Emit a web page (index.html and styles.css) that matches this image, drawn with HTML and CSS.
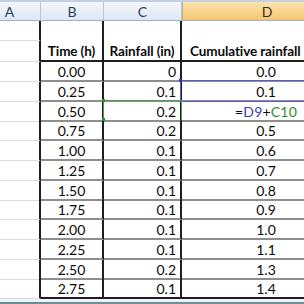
FILE: index.html
```html
<!DOCTYPE html>
<html lang="en">
<head>
  <meta charset="UTF-8">
  <title>Rainfall sheet</title>
  <link rel="stylesheet" href="styles.css">
</head>
<body>
  <div class="sheet">
    <div class="row colhead">
      <div class="cell first">A</div>
      <div class="cell">B</div>
      <div class="cell">C</div>
      <div class="cell active">D</div>
    </div>
    <div class="row blank">
      <div class="cell a"></div>
      <div class="cell t"></div>
      <div class="cell t"></div>
      <div class="cell t"></div>
    </div>
    <div class="row titles">
      <div class="cell a"></div>
      <div class="cell t">Time (h)</div>
      <div class="cell t">Rainfall (in)</div>
      <div class="cell t wide">Cumulative rainfall (in)</div>
    </div>
    <div class="row data"><div class="cell a"></div><div class="cell t">0.00</div><div class="cell t num">0</div><div class="cell t">0.0</div></div>
    <div class="row data"><div class="cell a"></div><div class="cell t">0.25</div><div class="cell t num">0.1</div><div class="cell t ref-blue">0.1</div></div>
    <div class="row data"><div class="cell a"></div><div class="cell t">0.50</div><div class="cell t num ref-green">0.2</div><div class="cell t edit">=<span class="blue">D9</span>+<span class="green">C10</span></div></div>
    <div class="row data"><div class="cell a"></div><div class="cell t">0.75</div><div class="cell t num">0.2</div><div class="cell t">0.5</div></div>
    <div class="row data"><div class="cell a"></div><div class="cell t">1.00</div><div class="cell t num">0.1</div><div class="cell t">0.6</div></div>
    <div class="row data"><div class="cell a"></div><div class="cell t">1.25</div><div class="cell t num">0.1</div><div class="cell t">0.7</div></div>
    <div class="row data"><div class="cell a"></div><div class="cell t">1.50</div><div class="cell t num">0.1</div><div class="cell t">0.8</div></div>
    <div class="row data"><div class="cell a"></div><div class="cell t">1.75</div><div class="cell t num">0.1</div><div class="cell t">0.9</div></div>
    <div class="row data"><div class="cell a"></div><div class="cell t">2.00</div><div class="cell t num">0.1</div><div class="cell t">1.0</div></div>
    <div class="row data"><div class="cell a"></div><div class="cell t">2.25</div><div class="cell t num">0.1</div><div class="cell t">1.1</div></div>
    <div class="row data"><div class="cell a"></div><div class="cell t">2.50</div><div class="cell t num">0.2</div><div class="cell t">1.3</div></div>
    <div class="row data last"><div class="cell a"></div><div class="cell t">2.75</div><div class="cell t num">0.1</div><div class="cell t">1.4</div></div>
    <div class="bottom-bar"></div>
  </div>
</body>
</html>
```

FILE: styles.css
```css
body {
  margin: 0;
  background-color: #ffffff;
  font-family: Lato, "Liberation Sans", sans-serif;
  color: #0a0a0a;
}

.sheet {
  width: 304px;
  height: 304px;
  overflow: hidden;
  position: relative;
}

.row {
  display: grid;
  grid-template-columns: 41px 63px 78px 170px;
  box-sizing: border-box;
}

.cell {
  display: flex;
  align-items: center;
  justify-content: center;
  box-sizing: border-box;
  font-size: 14px;
  white-space: nowrap;
  position: relative;
}

/* column letters */
.colhead {
  height: 21px;
  border-top: 2px solid #c3d1e3;
  border-bottom: 1px solid #9db3cc;
}

.colhead .cell {
  background: linear-gradient(#f4f7fc, #dde7f3);
  border-right: 1px solid #b7c7db;
  color: #2b3f5a;
  font-size: 14px;
  padding-top: 1px;
}

/* column A is partly scrolled off the left edge */
.colhead .cell.first {
  padding-right: 21px;
}

.colhead .cell.active {
  background: linear-gradient(#fbe3ae, #f6c673);
  border-left: 1px solid #c9a86a;
  color: #3a3020;
}

/* column A keeps the light gridlines */
.cell.a {
  border-bottom: 1px solid #d6dde8;
  border-right: 2px solid #1e1e1e;
}

.cell.t {
  border-right: 2px solid #1e1e1e;
}

.blank {
  height: 20px;
}

.titles {
  height: 21px;
}

.titles .cell.t {
  font-weight: bold;
  font-size: 13.5px;
  letter-spacing: -0.1px;
  border-bottom: 2px solid #1e1e1e;
  align-items: flex-end;
  padding-bottom: 1px;
}

.titles .cell.wide {
  justify-content: flex-start;
  padding-left: 8px;
  overflow: hidden;
}

.data {
  height: 19.75px;
}

.data .cell.t {
  border-bottom: 2px solid #8e8e8e;
  padding-top: 1px;
}

.data.last .cell.t {
  border-bottom: 2px solid #1e1e1e;
}

.cell.num {
  justify-content: flex-end;
  padding-right: 4px;
}

.edit {
  letter-spacing: 0.2px;
}

.blue {
  color: #3b3bc9;
}

.green {
  color: #2f8a34;
}

/* range highlights while editing the formula */
.ref-blue::after {
  content: "";
  position: absolute;
  left: -2px;
  top: -2px;
  right: -4px;
  bottom: -2px;
  border: 1px solid #5a5ad8;
}

.ref-blue::before {
  content: "";
  position: absolute;
  left: -3px;
  top: -3px;
  width: 3px;
  height: 3px;
  background: #3434c0;
  z-index: 1;
}

.ref-green::after {
  content: "";
  position: absolute;
  left: -1px;
  top: -2px;
  right: -2px;
  bottom: 0;
  border: 1px solid #4a9e46;
  border-bottom: none;
}

.ref-green::before {
  content: "";
  position: absolute;
  left: -2px;
  top: -3px;
  width: 3px;
  height: 3px;
  background: #2f8a34;
  box-shadow: 0 19px 0 #2f8a34;
  z-index: 1;
}

.bottom-bar {
  height: 7px;
  border-top: 3px solid #eef2f7;
  background: linear-gradient(#6a8790, #8aa3ad);
}
```
